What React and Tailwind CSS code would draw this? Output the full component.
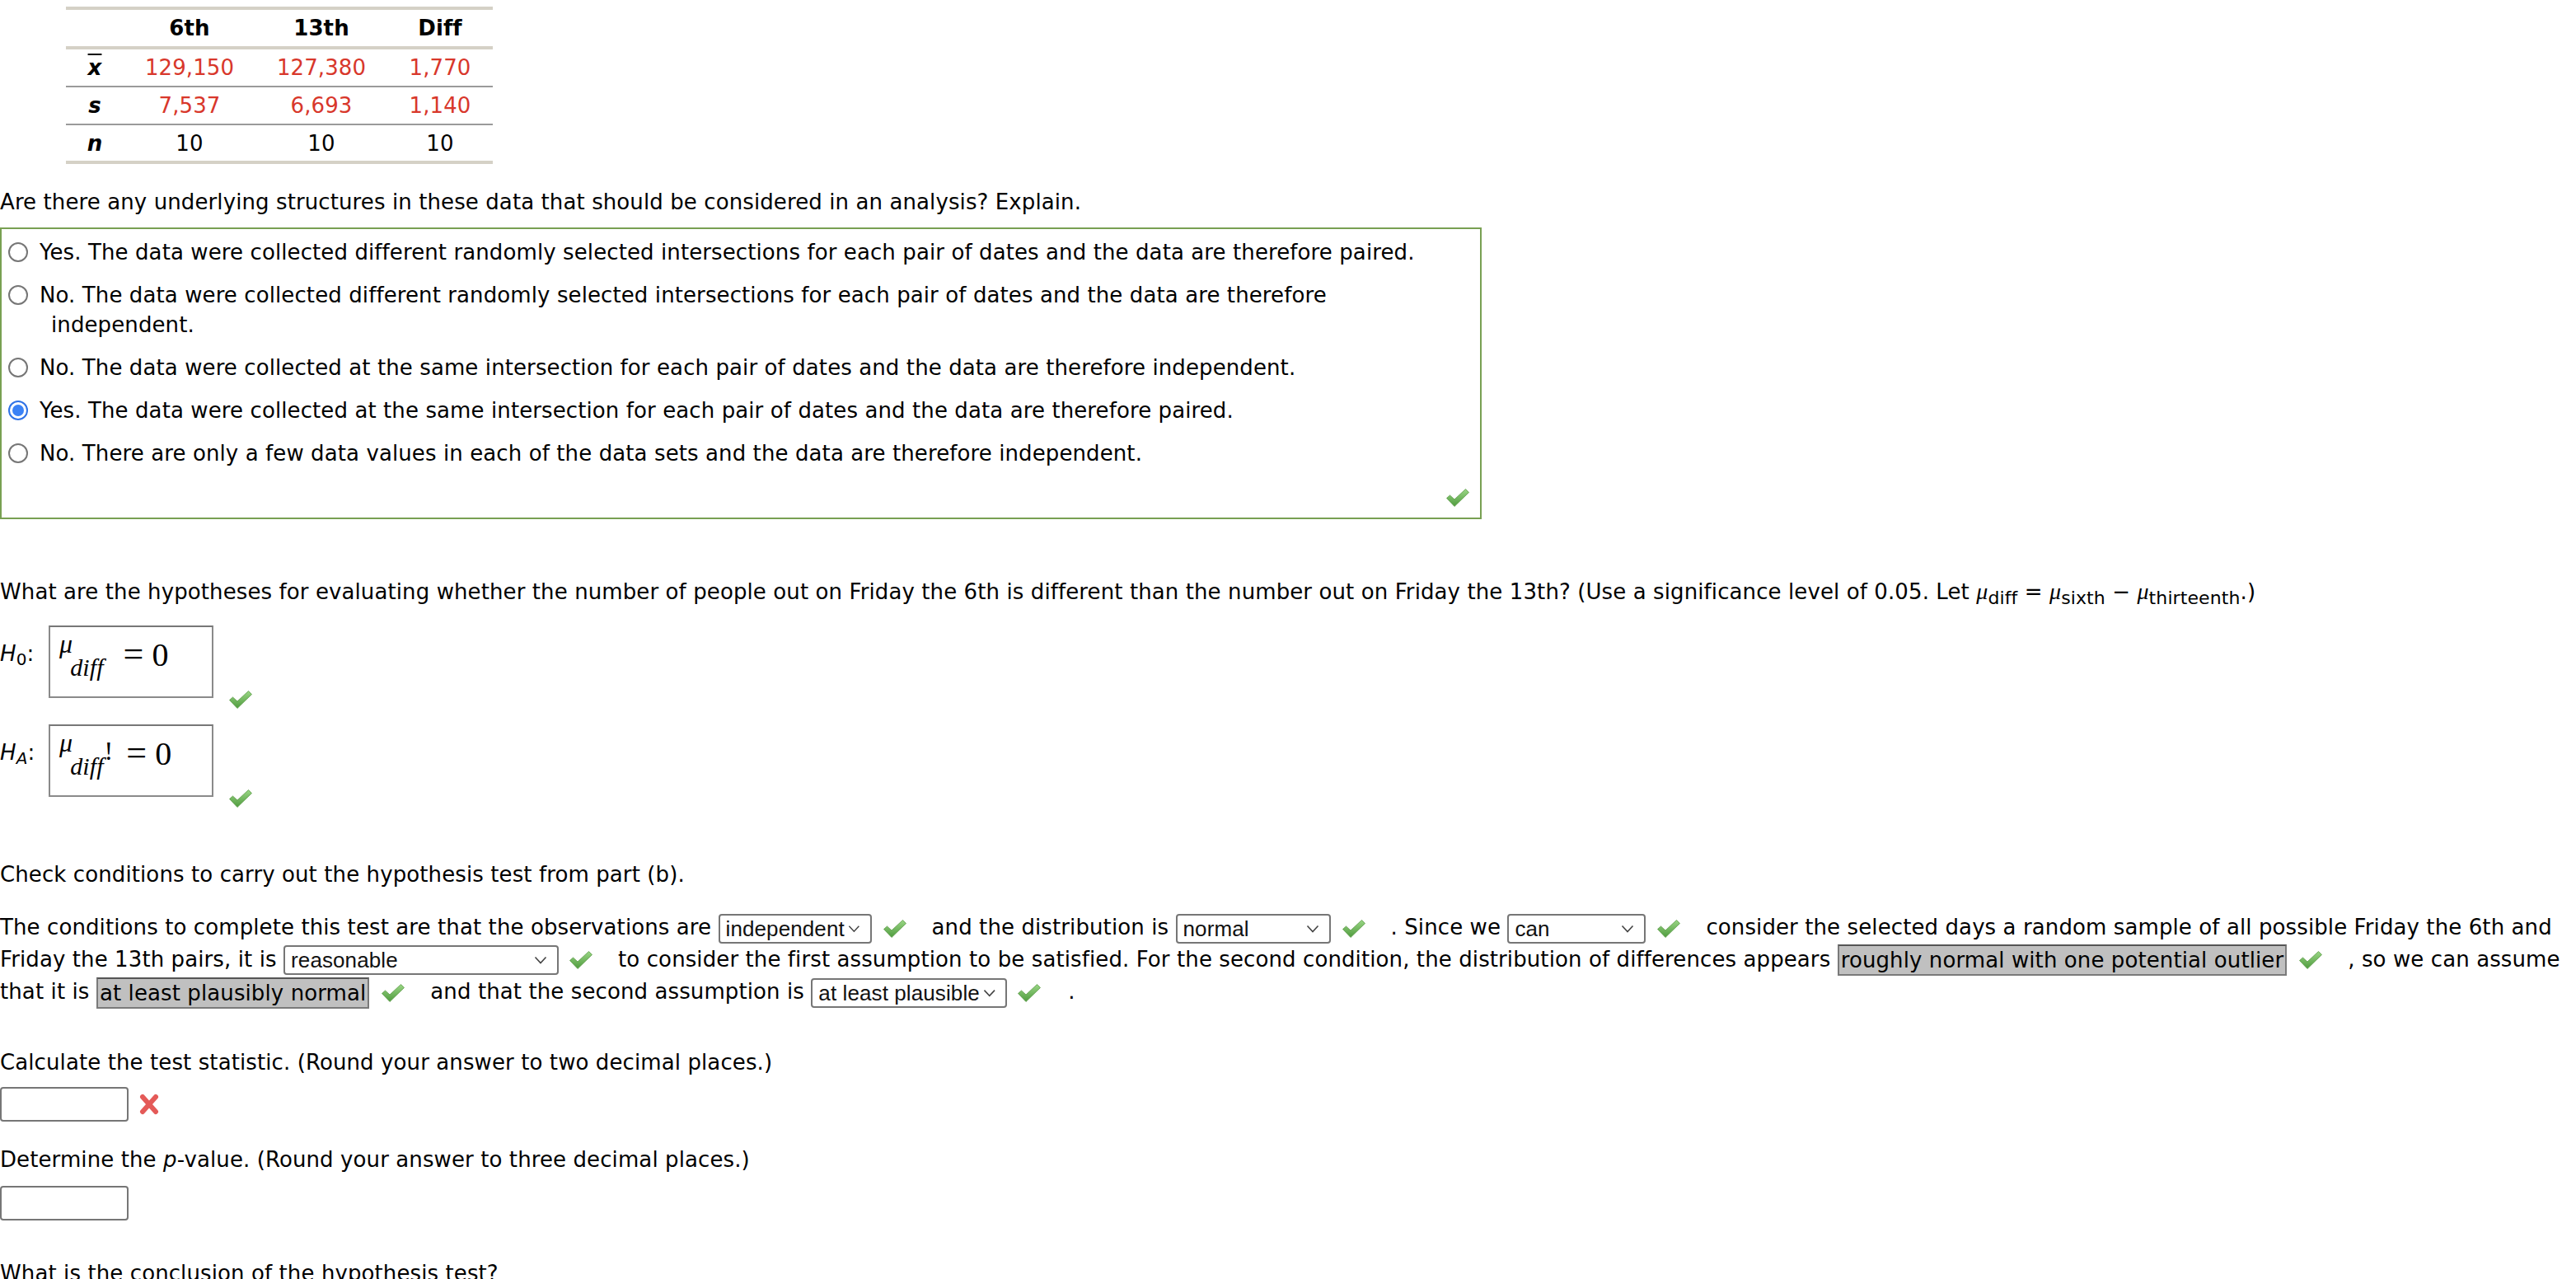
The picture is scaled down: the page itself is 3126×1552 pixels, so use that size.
import React from "react";

const Check = ({ className = "" }) => (
  <svg width="30" height="24" viewBox="0 0 30 24" className={className}>
    <defs>
      <linearGradient id="ck" x1="0" y1="0" x2="0" y2="1">
        <stop offset="0" stopColor="#9ad685" />
        <stop offset="1" stopColor="#4f9b3e" />
      </linearGradient>
    </defs>
    <path
      d="M1.5 12.5 L5.5 9 L11 14 L24.5 1.5 L28.5 5.5 L11 22.5 Z"
      fill="url(#ck)"
      stroke="#5c9a48"
      strokeWidth="0.8"
      strokeLinejoin="round"
    />
  </svg>
);

const Cross = () => (
  <svg width="26" height="26" viewBox="0 0 26 26" className="ml-[12px]">
    <path d="M5 4 L21 22 M21 4 L5 22" stroke="#e45a58" strokeWidth="6" strokeLinecap="round" />
  </svg>
);

const Select = ({ value, className = "" }) => (
  <span
    className={`inline-flex items-center justify-between h-[36px] pl-[7px] pr-[12px] border-2 border-[#767676] rounded-[4px] align-middle font-['Liberation_Sans',Arial,sans-serif] text-[26px] leading-none text-[#111] bg-white ${className}`}
  >
    <span>{value}</span>
    <svg width="16" height="10" viewBox="0 0 16 10" className="ml-[4px]">
      <path d="M1.5 1.5 L8 8.5 L14.5 1.5" fill="none" stroke="#444" strokeWidth="1.6" />
    </svg>
  </span>
);

const Hl = ({ children }) => (
  <span className="inline-block bg-[#c0c0c0] border-2 border-[#7a7a7a] border-t-[#555] px-[2px] leading-[34px] align-middle">
    {children}
  </span>
);

const Radio = ({ checked }) =>
  checked ? (
    <span className="shrink-0 w-[24px] h-[24px] rounded-full border-2 border-[#2f72e6] flex items-center justify-center bg-white">
      <span className="block w-[14px] h-[14px] rounded-full bg-[#3b82f6]" />
    </span>
  ) : (
    <span className="block shrink-0 w-[24px] h-[24px] rounded-full border-2 border-[#767676] bg-white" />
  );

const options = [
  { text: "Yes. The data were collected different randomly selected intersections for each pair of dates and the data are therefore paired." },
  { text: "No. The data were collected different randomly selected intersections for each pair of dates and the data are therefore independent." },
  { text: "No. The data were collected at the same intersection for each pair of dates and the data are therefore independent." },
  { text: "Yes. The data were collected at the same intersection for each pair of dates and the data are therefore paired.", checked: true },
  { text: "No. There are only a few data values in each of the data sets and the data are therefore independent." },
];

const Mu = () => <i className="font-['Liberation_Serif',serif] text-[28px]">μ</i>;

export default function App() {
  return (
    <div className="min-h-screen bg-white text-black font-['DejaVu_Sans',Verdana,sans-serif] text-[26px] leading-[38px] tracking-[0.1px] pb-[40px]">
      <table className="ml-[80px] mt-[8px] w-[518px] border-collapse text-center">
        <thead>
          <tr className="border-t-4 border-b-4 border-[#d5d1c6]">
            <th className="w-[70px] h-[48px] p-0"></th>
            <th className="w-[160px] p-0 font-bold">6th</th>
            <th className="w-[160px] p-0 font-bold">13th</th>
            <th className="w-[128px] p-0 font-bold">Diff</th>
          </tr>
        </thead>
        <tbody>
          <tr className="border-b-2 border-[#9a9a9a]">
            <td className="h-[47px] p-0 font-bold italic">
              <span className="overline decoration-2">x</span>
            </td>
            <td className="p-0 text-[#d8372b]">129,150</td>
            <td className="p-0 text-[#d8372b]">127,380</td>
            <td className="p-0 text-[#d8372b]">1,770</td>
          </tr>
          <tr className="border-b-2 border-[#9a9a9a]">
            <td className="h-[46px] p-0 font-bold italic">s</td>
            <td className="p-0 text-[#d8372b]">7,537</td>
            <td className="p-0 text-[#d8372b]">6,693</td>
            <td className="p-0 text-[#d8372b]">1,140</td>
          </tr>
          <tr className="border-b-4 border-[#d5d1c6]">
            <td className="h-[46px] p-0 font-bold italic">n</td>
            <td className="p-0">10</td>
            <td className="p-0">10</td>
            <td className="p-0">10</td>
          </tr>
        </tbody>
      </table>

      <p className="mt-[27px]">
        Are there any underlying structures in these data that should be considered in an analysis? Explain.
      </p>

      <div className="mt-[12px] w-[1798px] h-[354px] border-2 border-[#78a052] pt-[10px] pl-[8px] pr-[12px] flex flex-col">
        {options.map((o, i) => (
          <div key={i} className="flex items-start leading-[36px] mb-[16px]">
            <span className="block mt-[6px]">
              <Radio checked={o.checked} />
            </span>
            <span className="ml-[14px] w-[1700px] pl-[14px] [text-indent:-14px]">{o.text}</span>
          </div>
        ))}
        <div className="flex justify-end mt-auto mb-[12px]">
          <Check />
        </div>
      </div>

      <p className="mt-[69px] whitespace-nowrap">
        What are the hypotheses for evaluating whether the number of people out on Friday the 6th is different than the
        number out on Friday the 13th? (Use a significance level of 0.05. Let <Mu />
        <sub className="text-[22px]">diff</sub> = <Mu />
        <sub className="text-[22px]">sixth</sub> − <Mu />
        <sub className="text-[22px]">thirteenth</sub>.)
      </p>

      {[
        { sub: "0", not: false },
        { sub: "A", not: true },
      ].map((h, i) => (
        <div key={i} className={`flex items-start ${i === 0 ? "mt-[22px]" : "mt-[18px]"}`}>
          <span className="w-[59px] mt-[15px] whitespace-nowrap">
            <i>H</i>
            <sub className={`text-[20px] ${h.not ? "italic" : ""}`}>{h.sub}</sub>:
          </span>
          <div className="w-[200px] h-[88px] border-2 border-[#8a8a8a] border-t-[#777] pl-[11px] pt-[2px] font-['Liberation_Serif',serif] text-[40px] leading-[36px] whitespace-nowrap">
            <span className="italic text-[32px] align-[16px]">μ</span>
            <span className="italic text-[30px] align-[-12px] ml-[-3px]">diff</span>
            {h.not && <span className="text-[32px] ml-[1px] align-[6px]">!</span>}
            <span className={`text-[44px] ${h.not ? "ml-[16px]" : "ml-[24px]"}`}>=</span>
            <span className="ml-[10px]">0</span>
          </div>
          <Check className="ml-[18px] mt-[78px]" />
        </div>
      ))}

      <p className="mt-[61px]">Check conditions to carry out the hypothesis test from part (b).</p>

      <p className="mt-[26px] whitespace-nowrap">
        The conditions to complete this test are that the observations are <Select value="independent" className="w-[186px]" />
        <Check className="inline-block align-middle ml-[13px] mr-[30px]" />
        and the distribution is <Select value="normal" className="w-[188px]" />
        <Check className="inline-block align-middle ml-[13px] mr-[30px]" />
        . Since we <Select value="can" className="w-[168px]" />
        <Check className="inline-block align-middle ml-[13px] mr-[30px]" />
        consider the selected days a random sample of all possible Friday the 6th and
        <br />
        Friday the 13th pairs, it is <Select value="reasonable" className="w-[334px]" />
        <Check className="inline-block align-middle ml-[12px] mr-[30px]" />
        to consider the first assumption to be satisfied. For the second condition, the distribution of differences
        appears <Hl>roughly normal with one potential outlier</Hl>
        <Check className="inline-block align-middle ml-[14px] mr-[30px]" />, so we can assume
        <br />
        that it is <Hl>at least plausibly normal</Hl>
        <Check className="inline-block align-middle ml-[14px] mr-[30px]" />
        and that the second assumption is <Select value="at least plausible" className="w-[238px]" />
        <Check className="inline-block align-middle ml-[12px] mr-[32px]" />.
      </p>

      <p className="mt-[46px]">Calculate the test statistic. (Round your answer to two decimal places.)</p>
      <div className="mt-[11px] flex items-center">
        <div className="w-[156px] h-[42px] border-2 border-[#767676] rounded-[4px]" />
        <Cross />
      </div>

      <p className="mt-[27px]">
        Determine the <i>p</i>-value. (Round your answer to three decimal places.)
      </p>
      <div className="mt-[13px] w-[156px] h-[42px] border-2 border-[#767676] rounded-[4px]" />

      <p className="mt-[45px]">What is the conclusion of the hypothesis test?</p>
    </div>
  );
}
